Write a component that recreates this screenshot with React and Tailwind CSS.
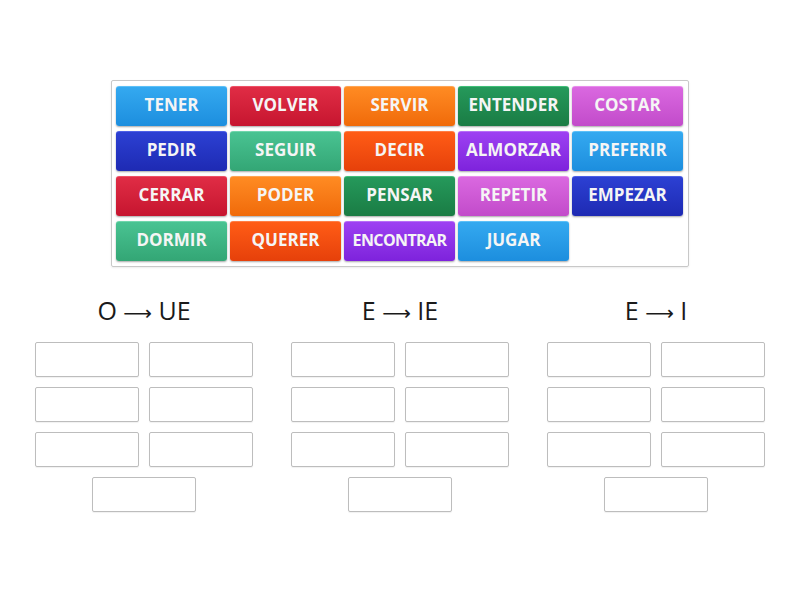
import React from 'react';

const tones = {
  sky: 'from-[#34a9f0] to-[#1c8ede] border-t-[#5cc0f7]',
  red: 'from-[#e02c45] to-[#c6142f] border-t-[#ee5066]',
  orange: 'from-[#ff8b22] to-[#f06a08] border-t-[#ffa452]',
  green: 'from-[#25995b] to-[#1a7c44] border-t-[#3fbf78]',
  pink: 'from-[#da68e0] to-[#c24bca] border-t-[#e88bec]',
  navy: 'from-[#2c40d3] to-[#1e2ab3] border-t-[#4c5fe6]',
  mint: 'from-[#49c392] to-[#33a675] border-t-[#6fd6ab]',
  flame: 'from-[#ff5c16] to-[#e6400a] border-t-[#ff7d45]',
  violet: 'from-[#9d40f2] to-[#7e22dc] border-t-[#b66cf7]',
};

const words = [
  ['TENER', 'sky'],
  ['VOLVER', 'red'],
  ['SERVIR', 'orange'],
  ['ENTENDER', 'green'],
  ['COSTAR', 'pink'],
  ['PEDIR', 'navy'],
  ['SEGUIR', 'mint'],
  ['DECIR', 'flame'],
  ['ALMORZAR', 'violet'],
  ['PREFERIR', 'sky'],
  ['CERRAR', 'red'],
  ['PODER', 'orange'],
  ['PENSAR', 'green'],
  ['REPETIR', 'pink'],
  ['EMPEZAR', 'navy'],
  ['DORMIR', 'mint'],
  ['QUERER', 'flame'],
  ['ENCONTRAR', 'violet'],
  ['JUGAR', 'sky'],
];

const groups = [
  ['O', 'UE'],
  ['E', 'IE'],
  ['E', 'I'],
];

const Tile = ({ word, tone }) => (
  <div
    className={`h-[40px] pb-[3px] rounded-[3px] border-t bg-linear-to-b ${tones[tone]} shadow-[0_1px_2px_rgba(0,0,0,0.35)] flex items-center justify-center text-[#f5f5f5] font-bold whitespace-nowrap ${
      word.length > 8 ? 'text-[16px] tracking-[-0.6px]' : 'text-[17px]'
    }`}
  >
    {word}
  </div>
);

const Slot = () => (
  <div className="w-[104px] h-[35px] rounded-[2px] border border-[#bdbdbd] bg-white shadow-[0_1px_1px_rgba(0,0,0,0.06)]" />
);

const App = () => {
  return (
    <div
      className="w-[800px] h-[600px] bg-white pt-[80px]"
      style={{ fontFamily: '"Open Sans", "Liberation Sans", sans-serif' }}
    >
      <div className="mx-auto w-[578px] border border-[#c8c8c8] rounded-[2px] shadow-[0_1px_2px_rgba(0,0,0,0.08)] px-[4px] pt-[5px] pb-[5px]">
        <div className="grid grid-cols-[repeat(5,111px)] gap-x-[3px] gap-y-[5px]">
          {words.map(([w, t]) => (
            <Tile key={w} word={w} tone={t} />
          ))}
        </div>
      </div>

      <div className="mx-auto w-[730px] mt-[27px] flex justify-between">
        {groups.map(([a, b]) => (
          <div key={a + b} className="w-[218px] flex flex-col items-center">
            <h2 className="text-[25px] leading-[33px] text-[#1a1a1a] font-normal mb-[12px] whitespace-nowrap">
              {a}{' '}
              <span className="font-['DejaVu_Sans'] text-[20px]">⟶</span>{' '}
              {b}
            </h2>
            <div className="grid grid-cols-2 gap-x-[10px] gap-y-[10px]">
              <Slot />
              <Slot />
              <Slot />
              <Slot />
              <Slot />
              <Slot />
            </div>
            <div className="mt-[10px]">
              <Slot />
            </div>
          </div>
        ))}
      </div>
    </div>
  );
};

export default App;
